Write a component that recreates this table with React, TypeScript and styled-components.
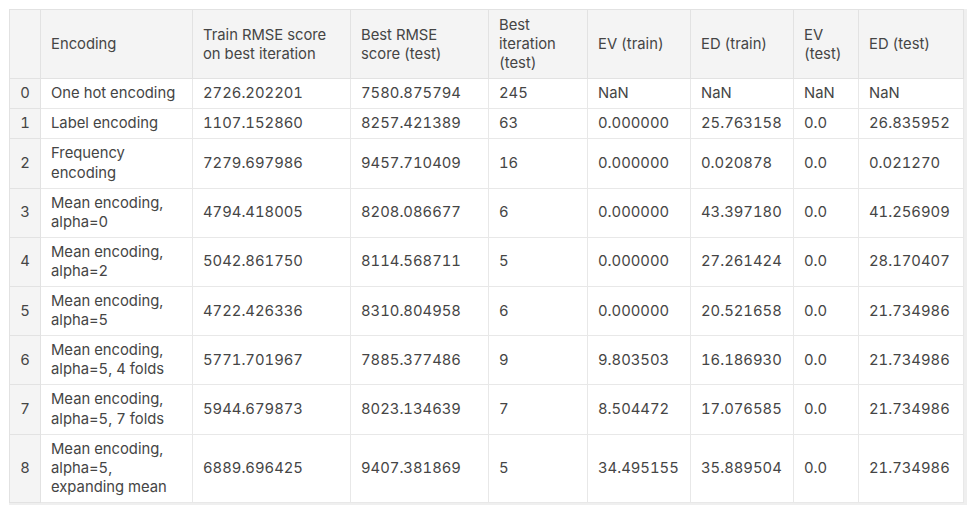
import React from "react";
import styled, { createGlobalStyle } from "styled-components";

const GlobalStyle = createGlobalStyle`
  body {
    margin: 0;
    background: #ffffff;
    font-family: Inter, "Noto Sans", "Liberation Sans", sans-serif;
  }
`;

const Frame = styled.div`
  padding: 9px 0 0 9px;
`;

const Scroller = styled.div`
  display: inline-block;
  border-right: 3px solid #efefef;
  border-bottom: 2px solid #efefef;
`;

const Table = styled.table`
  border-collapse: collapse;
  table-layout: fixed;
  width: 954px;
  font-size: 14.8px;
  line-height: 19.1px;
  color: #454545;
  font-variant-numeric: tabular-nums;
`;

const HeadCell = styled.th<{ $w: number }>`
  box-sizing: border-box;
  width: ${(p) => p.$w}px;
  background: #f4f4f4;
  border: 1px solid #e2e2e2;
  padding: 6px 10px 5px;
  font-weight: 400;
  text-align: left;
  vertical-align: middle;
`;

const IndexCell = styled.td`
  background: #f4f4f4;
  border: 1px solid #e2e2e2;
  padding: 5px 0;
  text-align: center;
  vertical-align: middle;
`;

const Cell = styled.td`
  border: 1px solid #e8e8e8;
  padding: 5px 10px;
  text-align: left;
  vertical-align: middle;
  background: #ffffff;
`;

const columns: [string, number][] = [
  ["", 31],
  ["Encoding", 152],
  ["Train RMSE score on best iteration", 158],
  ["Best RMSE score (test)", 138],
  ["Best iteration (test)", 99],
  ["EV (train)", 103],
  ["ED (train)", 103],
  ["EV (test)", 65],
  ["ED (test)", 105],
];

const rows: string[][] = [
  ["One hot encoding", "2726.202201", "7580.875794", "245", "NaN", "NaN", "NaN", "NaN"],
  ["Label encoding", "1107.152860", "8257.421389", "63", "0.000000", "25.763158", "0.0", "26.835952"],
  ["Frequency encoding", "7279.697986", "9457.710409", "16", "0.000000", "0.020878", "0.0", "0.021270"],
  ["Mean encoding, alpha=0", "4794.418005", "8208.086677", "6", "0.000000", "43.397180", "0.0", "41.256909"],
  ["Mean encoding, alpha=2", "5042.861750", "8114.568711", "5", "0.000000", "27.261424", "0.0", "28.170407"],
  ["Mean encoding, alpha=5", "4722.426336", "8310.804958", "6", "0.000000", "20.521658", "0.0", "21.734986"],
  ["Mean encoding, alpha=5, 4 folds", "5771.701967", "7885.377486", "9", "9.803503", "16.186930", "0.0", "21.734986"],
  ["Mean encoding, alpha=5, 7 folds", "5944.679873", "8023.134639", "7", "8.504472", "17.076585", "0.0", "21.734986"],
  ["Mean encoding, alpha=5, expanding mean", "6889.696425", "9407.381869", "5", "34.495155", "35.889504", "0.0", "21.734986"],
];

export default function App() {
  return (
    <>
      <GlobalStyle />
      <Frame>
        <Scroller>
          <Table>
            <thead>
              <tr>
                {columns.map(([label, w], i) => (
                  <HeadCell key={i} $w={w}>
                    {label}
                  </HeadCell>
                ))}
              </tr>
            </thead>
            <tbody>
              {rows.map((r, i) => (
                <tr key={i}>
                  <IndexCell>{i}</IndexCell>
                  {r.map((v, j) => (
                    <Cell key={j}>{v}</Cell>
                  ))}
                </tr>
              ))}
            </tbody>
          </Table>
        </Scroller>
      </Frame>
    </>
  );
}
